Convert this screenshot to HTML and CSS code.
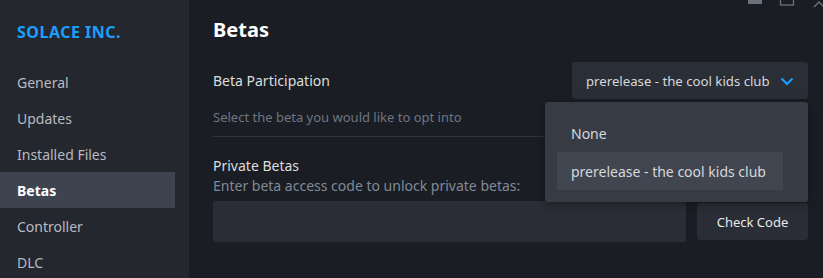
FILE: index.html
```html
<!DOCTYPE html>
<html>
<head>
<meta charset="utf-8">
<link rel="stylesheet" href="styles.css">
</head>
<body>
<div class="app">
  <aside class="sidebar">
    <div class="brand">SOLACE INC.</div>
    <nav class="nav">
      <div class="nav-item">General</div>
      <div class="nav-item">Updates</div>
      <div class="nav-item">Installed Files</div>
      <div class="nav-item active">Betas</div>
      <div class="nav-item">Controller</div>
      <div class="nav-item">DLC</div>
    </nav>
  </aside>
  <main class="main">
    <h1 class="title">Betas</h1>
    <section class="field">
      <div class="field-row">
        <div class="label">Beta Participation</div>
        <div class="select-wrap">
          <div class="select">
            <span>prerelease - the cool kids club</span>
            <svg class="chev" width="14" height="9" viewBox="0 0 14 9"><path d="M1.5 1.5 L7 7 L12.5 1.5" fill="none" stroke="#1a9fff" stroke-width="2.2"/></svg>
          </div>
          <div class="menu">
            <div class="menu-item">None</div>
            <div class="menu-item selected">prerelease - the cool kids club</div>
          </div>
        </div>
      </div>
      <div class="desc">Select the beta you would like to opt into</div>
    </section>
    <section class="private">
      <div class="label">Private Betas</div>
      <div class="desc2">Enter beta access code to unlock private betas:</div>
      <div class="code-row">
        <div class="input"></div>
        <div class="btn">Check Code</div>
      </div>
    </section>
  </main>
  <div class="winctl">
    <svg width="90" height="12" viewBox="0 0 90 12">
      <rect x="15" y="0" width="14" height="4" fill="#6b717b"/>
      <rect x="47.5" y="-3" width="13" height="8" fill="none" stroke="#6b717b" stroke-width="1.3"/>
      <path d="M81 7 L86 2 L91 7" fill="none" stroke="#6b717b" stroke-width="1.3"/>
    </svg>
  </div>
</div>
</body>
</html>
```
FILE: styles.css
```css
* { box-sizing: border-box; }
html, body { margin: 0; padding: 0; }
body {
  width: 823px;
  height: 278px;
  overflow: hidden;
  background: #1a1d24;
  font-family: "Noto Sans", "Open Sans", sans-serif;
  color: #dcdedf;
}
.app {
  position: relative;
  display: flex;
  height: 278px;
}
.sidebar {
  width: 189px;
  flex: none;
  background: #24272e;
  padding-top: 21px;
}
.brand {
  padding-left: 17px;
  color: #1a9fff;
  font-weight: bold;
  font-size: 16px;
  line-height: 22px;
  letter-spacing: 0.5px;
}
.nav {
  margin-top: 21px;
  margin-right: 14px;
  display: flex;
  flex-direction: column;
}
.nav-item {
  height: 36px;
  display: flex;
  align-items: center;
  padding-left: 17px;
  font-size: 14px;
  color: #b7bbc0;
}
.nav-item.active {
  background: #3d4450;
  color: #ffffff;
  font-weight: bold;
}
.main {
  flex: 1;
  padding: 15px 15px 0 24px;
  display: flex;
  flex-direction: column;
}
.title {
  margin: 0;
  font-size: 20px;
  line-height: 30px;
  font-weight: bold;
  color: #ffffff;
}
.field {
  margin-top: 17px;
  border-bottom: 1px solid #30343d;
  padding-bottom: 10px;
}
.field-row {
  display: flex;
  justify-content: space-between;
  align-items: center;
}
.label {
  font-size: 14px;
  color: #dcdedf;
  line-height: 20px;
}
.select-wrap {
  position: relative;
}
.select {
  width: 236px;
  height: 37px;
  background: #2a2e37;
  border-radius: 3px;
  display: flex;
  align-items: center;
  padding-left: 14px;
  gap: 10px;
  font-size: 13.2px;
  color: #d6d8db;
}
.chev { margin-top: 1px; }
.menu {
  position: absolute;
  top: 40px;
  right: 0;
  width: 263px;
  background: #373b44;
  border-radius: 3px;
  padding: 12px 25px 12px 12px;
  box-shadow: 0 2px 8px rgba(0,0,0,0.35);
  z-index: 2;
}
.menu-item {
  height: 38px;
  display: flex;
  align-items: center;
  padding-left: 14px;
  font-size: 14px;
  color: #d6d8db;
}
.menu-item.selected {
  background: #40454f;
}
.desc {
  margin-top: 9px;
  font-size: 13px;
  line-height: 18px;
  color: #6e7682;
}
.private {
  margin-top: 19px;
}
.private .label { line-height: 20px; }
.desc2 {
  font-size: 14px;
  line-height: 20px;
  color: #7f8a96;
}
.code-row {
  display: flex;
  align-items: center;
  gap: 11px;
  margin-top: 5px;
}
.input {
  flex: 1;
  height: 41px;
  background: #2a2d35;
  border-radius: 3px;
}
.btn {
  width: 111px;
  height: 37px;
  background: #2a2d35;
  border-radius: 3px;
  display: flex;
  align-items: center;
  justify-content: center;
  font-size: 13px;
  color: #e6e8ea;
}
.winctl {
  position: absolute;
  top: 0;
  right: 0;
  width: 90px;
  height: 12px;
  line-height: 0;
}
```
